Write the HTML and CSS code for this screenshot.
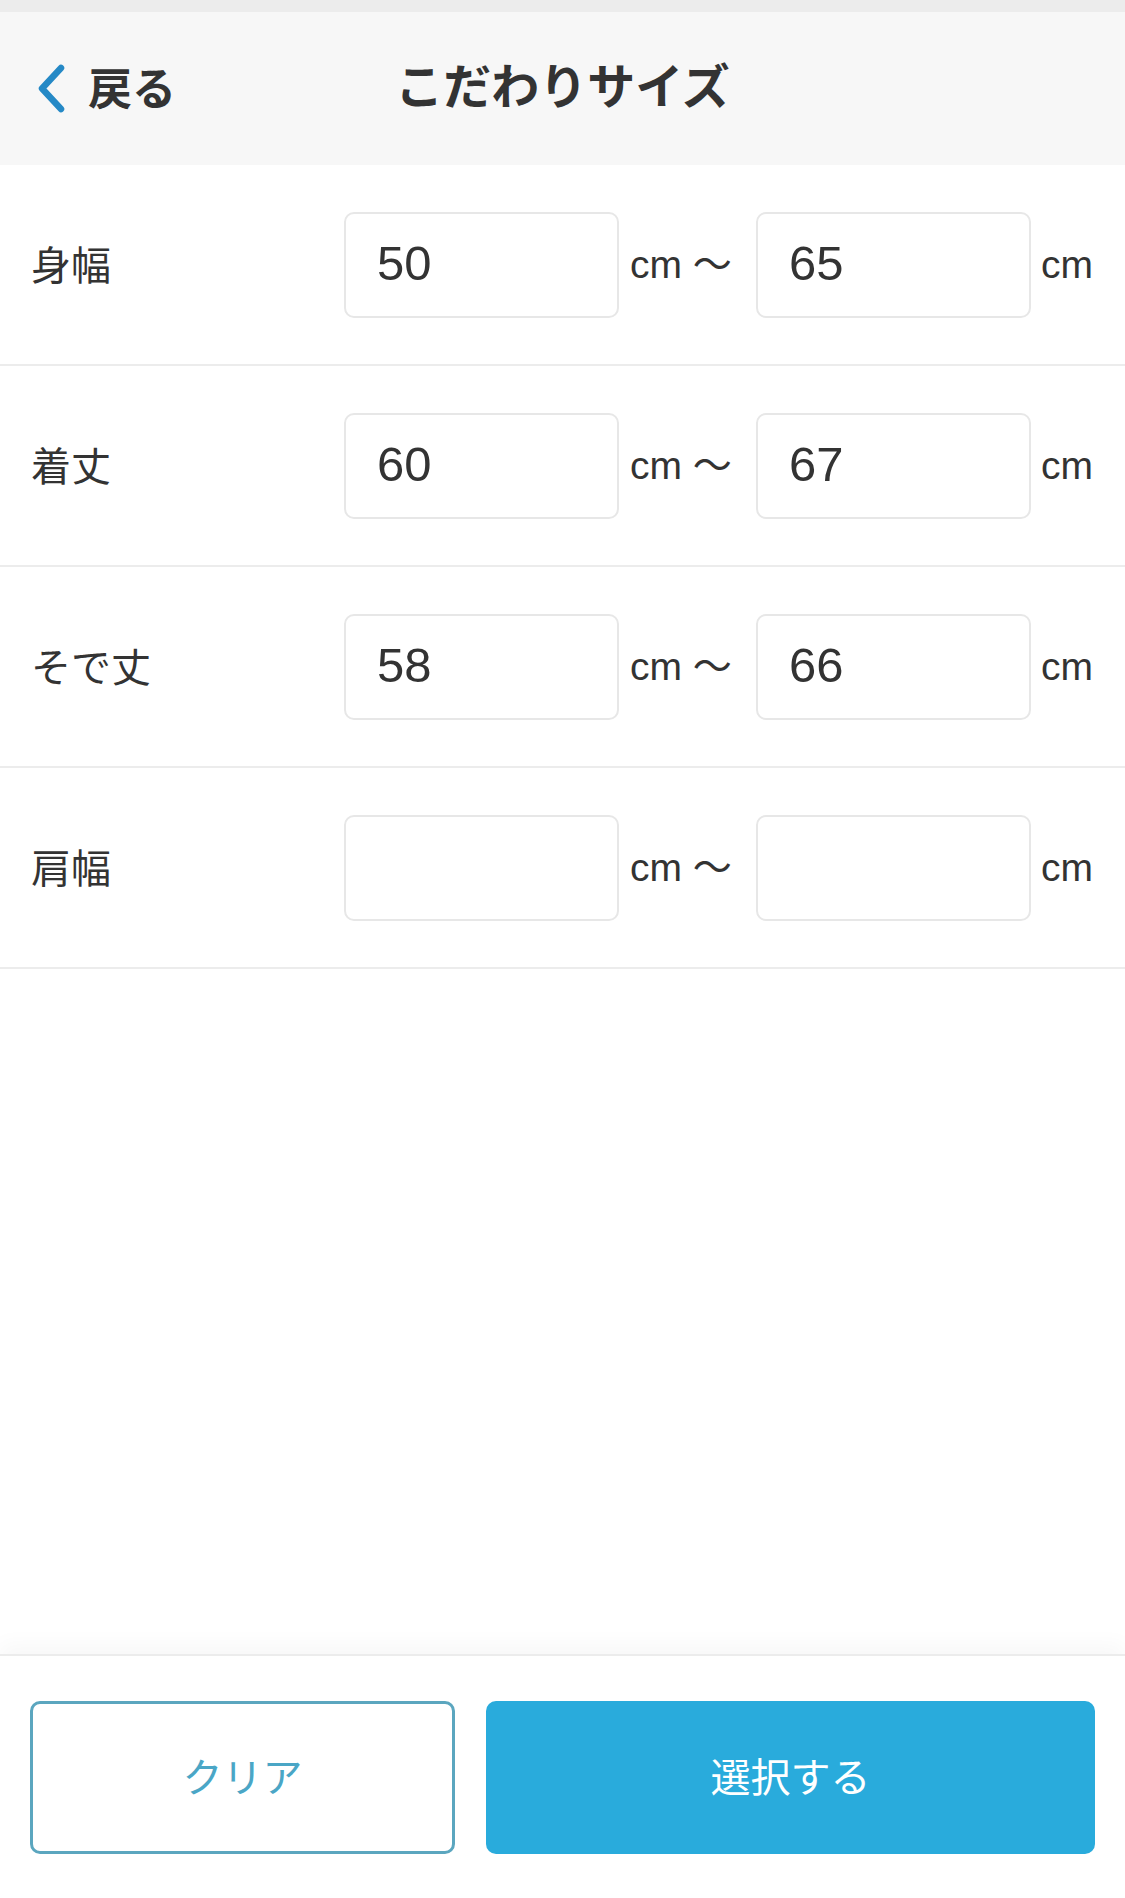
FILE: index.html
```html
<!DOCTYPE html>
<html lang="ja">
<head>
<meta charset="utf-8">
<title>こだわりサイズ</title>
<link rel="stylesheet" href="styles.css">
</head>
<body>
<div class="app">
  <div class="statusbar"></div>
  <header class="nav">
    <a class="back" href="#">
      <svg class="chevron" width="30" height="49" viewBox="0 0 30 49" aria-hidden="true">
        <path d="M25 4 L6 24.5 L25 45" fill="none" stroke="#2589c6" stroke-width="6.5" stroke-linecap="round" stroke-linejoin="round"/>
      </svg>
      <span>戻る</span>
    </a>
    <h1 class="title">こだわりサイズ</h1>
    <div class="nav-spacer"></div>
  </header>

  <main class="list">
    <div class="row">
      <div class="label">身幅</div>
      <input class="field" type="text" value="50">
      <div class="sep">cm 〜</div>
      <input class="field" type="text" value="65">
      <div class="unit">cm</div>
    </div>
    <div class="row">
      <div class="label">着丈</div>
      <input class="field" type="text" value="60">
      <div class="sep">cm 〜</div>
      <input class="field" type="text" value="67">
      <div class="unit">cm</div>
    </div>
    <div class="row">
      <div class="label">そで丈</div>
      <input class="field" type="text" value="58">
      <div class="sep">cm 〜</div>
      <input class="field" type="text" value="66">
      <div class="unit">cm</div>
    </div>
    <div class="row">
      <div class="label">肩幅</div>
      <input class="field" type="text" value="">
      <div class="sep">cm 〜</div>
      <input class="field" type="text" value="">
      <div class="unit">cm</div>
    </div>
  </main>

  <div class="spacer"></div>

  <footer class="actions">
    <button class="btn btn-clear" type="button">クリア</button>
    <button class="btn btn-select" type="button">選択する</button>
  </footer>
</div>
</body>
</html>
```

FILE: styles.css
```css
* {
  box-sizing: border-box;
}

html, body {
  margin: 0;
  padding: 0;
  background: #ffffff;
}

body {
  font-family: "Noto Sans CJK JP", "Noto Sans", sans-serif;
  color: #333333;
}

.app {
  display: flex;
  flex-direction: column;
  min-height: 1898px;
}

.statusbar {
  height: 12px;
  background: #ececec;
}

.nav {
  height: 153px;
  background: #f7f7f7;
  display: grid;
  grid-template-columns: 1fr auto 1fr;
  align-items: center;
}

.back {
  display: flex;
  align-items: center;
  gap: 22px;
  padding-left: 36px;
  text-decoration: none;
  color: #333333;
  font-size: 44px;
  font-weight: 700;
  line-height: 1;
}

.back span {
  position: relative;
  top: -3px;
}

.chevron {
  display: block;
}

.title {
  margin: 0 0 12px;
  font-size: 48px;
  font-weight: 700;
  line-height: 1;
  color: #333333;
}

.list {
  display: flex;
  flex-direction: column;
}

.row {
  height: 201px;
  border-bottom: 2px solid #ececec;
  display: flex;
  align-items: center;
  padding-left: 31px;
}

.label {
  flex: 0 0 313px;
  font-size: 40px;
  line-height: 1;
  color: #333333;
  padding-bottom: 3px;
}

.field {
  flex: 0 0 275px;
  width: 275px;
  height: 106px;
  border: 2px solid #e7e7e7;
  border-radius: 10px;
  background: #ffffff;
  padding: 0 0 3px 31px;
  margin: 0;
  font-family: "Liberation Sans", Arial, sans-serif;
  font-size: 49px;
  color: #333333;
  outline: none;
}

.sep {
  flex: 0 0 137px;
  padding-left: 11px;
  font-family: "Liberation Sans", Arial, "Noto Sans CJK JP", sans-serif;
  font-size: 39px;
  line-height: 1;
  color: #333333;
  white-space: nowrap;
}

.unit {
  padding-left: 10px;
  font-family: "Liberation Sans", Arial, sans-serif;
  font-size: 39px;
  line-height: 1;
  color: #333333;
}

.spacer {
  flex: 1;
}

.actions {
  border-top: 2px solid #ececec;
  box-shadow: 0 -10px 20px rgba(0, 0, 0, 0.03);
  background: #ffffff;
  display: grid;
  grid-template-columns: 425px 1fr;
  gap: 31px;
  padding: 45px 30px 44px;
}

.btn {
  height: 153px;
  border-radius: 10px;
  font-family: "Noto Sans CJK JP", sans-serif;
  font-size: 40px;
  font-weight: 400;
  cursor: pointer;
  margin: 0;
  padding: 0 0 6px;
}

.btn-clear {
  background: #ffffff;
  border: 3px solid #5ba6bf;
  color: #4aa6c6;
}

.btn-select {
  background: #29abdc;
  border: none;
  color: #ffffff;
}
```
